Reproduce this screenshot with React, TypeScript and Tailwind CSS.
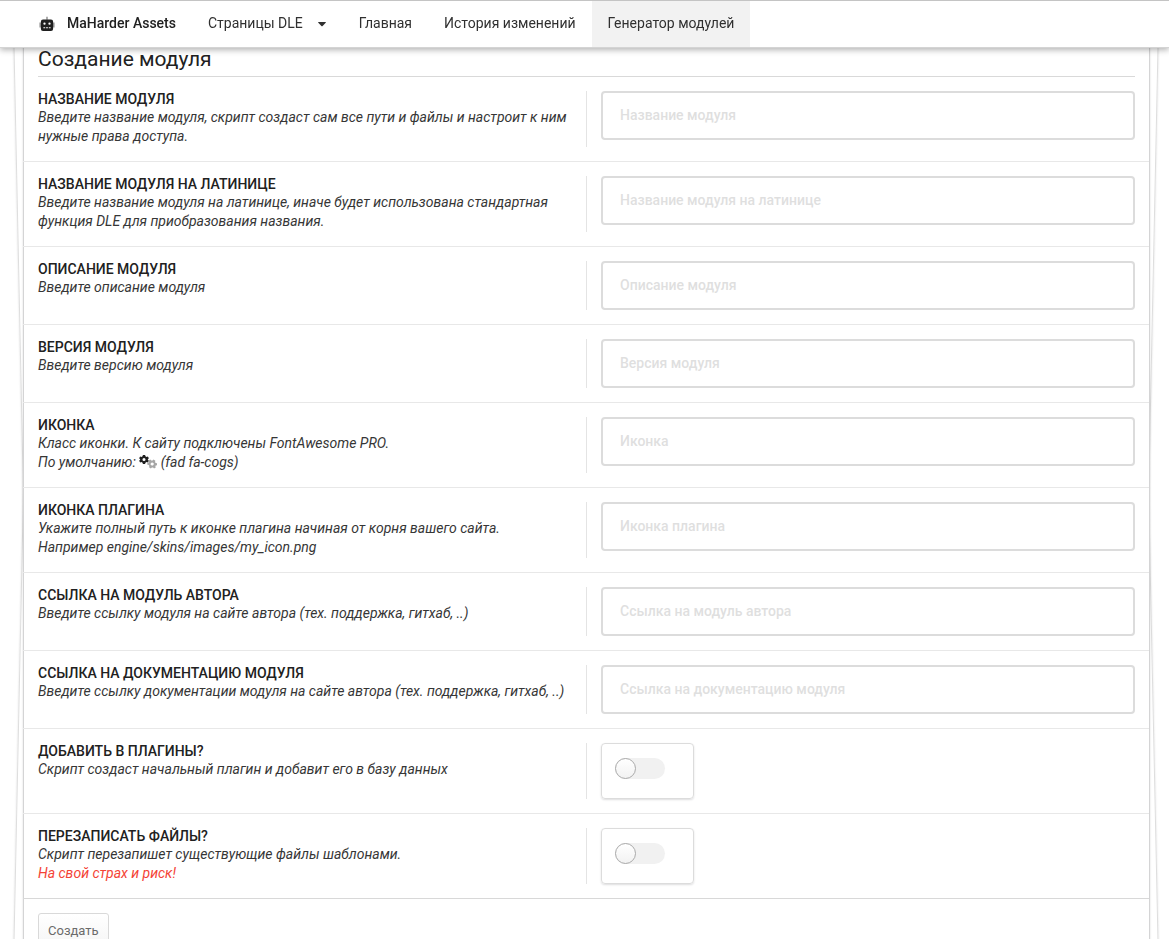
import type { ReactNode } from "react";

type Field = { id: string; title: string; hint: ReactNode; toggle?: boolean };

function RobotIcon() {
  return (
    <svg viewBox="0 0 16 16" className="mt-[2px] h-4 w-4 shrink-0" aria-hidden="true">
      <path fill="#9a9a9a" d="M7.200.8h1.600v3H7.200zM.4 6.500h2v5H.4zM13.600 6.500h2v5h-2z" />
      <path
        fill="#1f1f1f"
        fillRule="evenodd"
        d="M4 3.400h8A2.100 2.100 0 0 1 14.100 5.500v7.400A2.100 2.100 0 0 1 12 15H4a2.100 2.100 0 0 1-2.100-2.100V5.500A2.100 2.100 0 0 1 4 3.400zM5.500 6.500a1.150 1.150 0 1 0 0 2.300 1.150 1.150 0 0 0 0-2.300zm5 0a1.150 1.150 0 1 0 0 2.300 1.150 1.150 0 0 0 0-2.300zM4.400 11.200v1h1.800v-1zm2.700 0v1h1.800v-1zm2.700 0v1h1.800v-1z"
      />
    </svg>
  );
}

const gear =
  "M-1.200-5h2.400l.4 1.500 1.200.7 1.500-.5 1.100 1.800-1.100 1.100v.8l1.100 1.100-1.100 1.800-1.500-.5-1.200.7L1.200 5h-2.400l-.4-1.500-1.200-.7-1.500.5-1.100-1.800L-4.300.4v-.8l-1.100-1.100 1.100-1.800 1.500.5 1.200-.7zM0-1.700a1.700 1.700 0 1 0 0 3.400 1.700 1.700 0 0 0 0-3.400z";

function CogsIcon() {
  return (
    <svg viewBox="0 0 18 14" className="inline-block h-[14px] w-[18px] align-[-2px]" aria-hidden="true">
      <path transform="translate(5 4.500) scale(.9)" fill="#1f1f1f" fillRule="evenodd" d={gear} />
      <path transform="translate(13.200 9) rotate(30) scale(.9)" fill="#a6a6a6" fillRule="evenodd" d={gear} />
    </svg>
  );
}

const fields: Field[] = [
  {
    id: "name",
    title: "Название модуля",
    hint: "Введите название модуля, скрипт создаст сам все пути и файлы и настроит к ним нужные права доступа.",
  },
  {
    id: "latin",
    title: "Название модуля на латинице",
    hint: "Введите название модуля на латинице, иначе будет использована стандартная функция DLE для приобразования названия.",
  },
  { id: "description", title: "Описание модуля", hint: "Введите описание модуля" },
  { id: "version", title: "Версия модуля", hint: "Введите версию модуля" },
  {
    id: "icon",
    title: "Иконка",
    hint: (
      <>
        Класс иконки. К сайту подключены FontAwesome PRO.
        <br />
        По умолчанию: <CogsIcon /> (fad fa-cogs)
      </>
    ),
  },
  {
    id: "plugin-icon",
    title: "Иконка плагина",
    hint: (
      <>
        Укажите полный путь к иконке плагина начиная от корня вашего сайта.
        <br />
        Например engine/skins/images/my_icon.png
      </>
    ),
  },
  {
    id: "link",
    title: "Ссылка на модуль автора",
    hint: "Введите ссылку модуля на сайте автора (тех. поддержка, гитхаб, ..)",
  },
  {
    id: "docs",
    title: "Ссылка на документацию модуля",
    hint: "Введите ссылку документации модуля на сайте автора (тех. поддержка, гитхаб, ..)",
  },
  {
    id: "plugins",
    title: "Добавить в плагины?",
    hint: "Скрипт создаст начальный плагин и добавит его в базу данных",
    toggle: true,
  },
  {
    id: "overwrite",
    title: "Перезаписать файлы?",
    hint: (
      <>
        Скрипт перезапишет существующие файлы шаблонами.
        <br />
        <span className="text-[#f44336]">На свой страх и риск!</span>
      </>
    ),
    toggle: true,
  },
];

function FieldRow({ field }: { field: Field }) {
  return (
    <div className="grid grid-cols-2 border-b border-[#e8e8e8] py-[14px] last:border-[#d8d8d8]">
      <div className="pr-[14px] pb-px pl-[15px]">
        <label htmlFor={field.id} className="block leading-[17px] font-medium uppercase text-[#212121]">
          {field.title}
        </label>
        <p id={`${field.id}-hint`} className="leading-[19px] italic">
          {field.hint}
        </p>
      </div>
      <div className="border-l border-[#e4e4e4] px-[14px]">
        {field.toggle ? (
          <div className="h-14 w-[93px] rounded border border-[#dcdcdc] px-[13px] py-[14px] shadow-[0_1px_2px_rgba(34,36,38,0.15)]">
            <input
              id={field.id}
              type="checkbox"
              role="switch"
              aria-describedby={`${field.id}-hint`}
              className="block h-[21px] w-[50px] appearance-none rounded-full bg-[#f1f1f1] before:block before:h-[21px] before:w-[21px] before:rounded-full before:border before:border-[#aaa] before:bg-linear-to-b before:from-white before:to-[#f2f2f2] checked:bg-[#2185d0] checked:before:ml-auto"
            />
          </div>
        ) : (
          <input
            id={field.id}
            type="text"
            placeholder={field.title}
            aria-describedby={`${field.id}-hint`}
            className="block h-[49px] w-full rounded border-2 border-[#dcdcdc] bg-white px-[17px] pb-[2px] font-medium outline-none placeholder:text-[#dfdfdf] focus:border-[#85b7d9]"
          />
        )}
      </div>
    </div>
  );
}

export default function App() {
  return (
    <div className="h-screen overflow-hidden bg-white font-['Roboto','Noto_Sans',sans-serif] text-[14px] text-[#363636]">
      <header className="fixed inset-x-0 top-0 z-10 border-t border-b border-t-[#c4c4c4] border-b-[#d4d4d4] bg-white shadow-[0_2px_6px_rgba(0,0,0,0.3)]">
        <nav className="flex h-[46px] items-stretch pl-[23px] text-[#303030]">
          <a href="#home" className="flex items-center gap-3 px-4 pb-[2px] font-medium text-[#212121]">
            <RobotIcon />
            MaHarder Assets
          </a>
          <button type="button" className="flex items-center gap-[14px] px-4 pb-[2px]">
            Страницы DLE
            <svg viewBox="0 0 10 6" className="mt-[2px] h-[6px] w-[10px]" aria-hidden="true">
              <path d="M1.500 1h7Q9.200 1 8.700 1.700L5.600 4.900Q5 5.400 4.400 4.900L1.300 1.700Q.8 1 1.500 1z" fill="currentColor" />
            </svg>
          </button>
          <a href="#main" className="flex items-center px-4 pb-[2px]">Главная</a>
          <a href="#history" className="flex items-center px-4 pb-[2px]">История изменений</a>
          <a href="#generator" aria-current="page" className="flex items-center bg-[#f2f2f2] px-4 pb-[2px]">
            Генератор модулей
          </a>
        </nav>
      </header>

      <main className="relative isolate mt-[26px] mr-5 ml-[23px] before:absolute before:inset-0 before:-z-20 before:rotate-[1.2deg] before:border before:border-[#dedede] before:bg-white before:shadow-[0_1px_2px_rgba(34,36,38,0.15)] after:absolute after:inset-0 after:-z-20 after:-rotate-[1.2deg] after:border after:border-[#dedede] after:bg-white after:shadow-[0_1px_2px_rgba(34,36,38,0.15)]">
        <div className="absolute top-0 -right-px bottom-0 left-0 -z-10 border border-[#d4d4d5] bg-white shadow-[0_1px_2px_rgba(34,36,38,0.15)]" />
        <form>
          <h1 className="mr-[14px] ml-[15px] border-b border-[#d9d9d9] pt-5 pb-[3px] text-[21px] leading-[27px] text-[#212121]">
            Создание модуля
          </h1>
          <div>
            {fields.map((field) => (
              <FieldRow key={field.id} field={field} />
            ))}
          </div>
          <div className="py-[14px] pr-[14px] pl-[15px]">
            <button
              type="button"
              className="h-9 rounded-[3px] border border-[#d9d9d9] bg-linear-to-b from-white to-[#f5f5f5] px-[9px] text-[13px] text-[#6b6b6b]"
            >
              Создать
            </button>
          </div>
        </form>
      </main>
    </div>
  );
}
